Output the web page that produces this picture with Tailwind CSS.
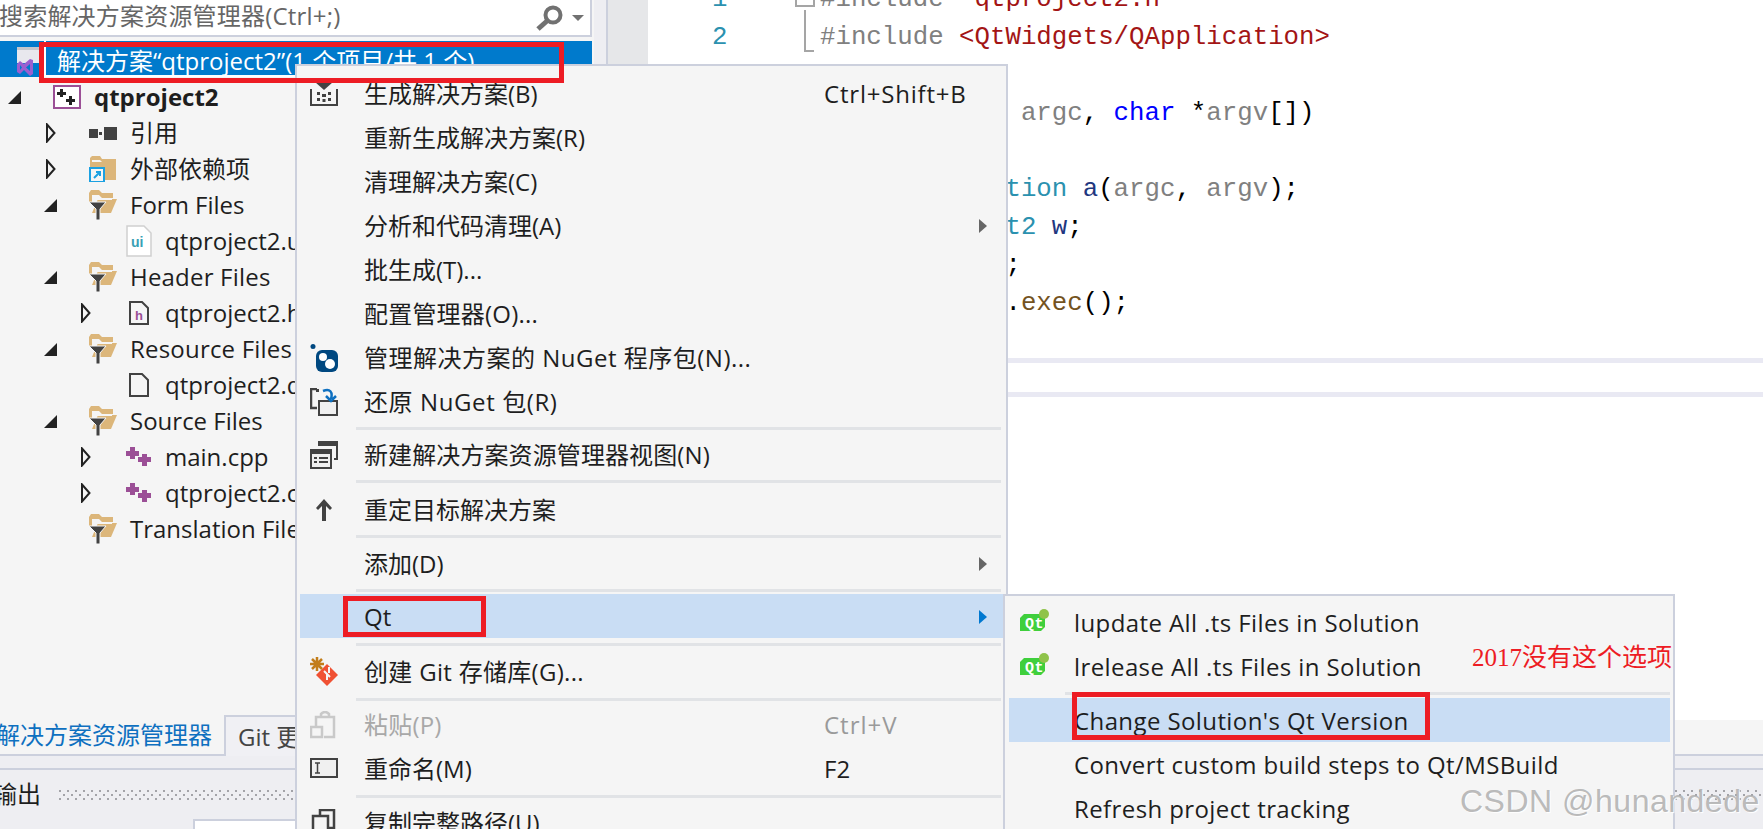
<!DOCTYPE html>
<html lang="zh-CN">
<head>
<meta charset="UTF-8">
<title>Solution Explorer context menu</title>
<script src="https://cdn.jsdelivr.net/npm/@tailwindcss/browser@4"></script>
</head>
<body class="bg-[#eeeef2]">
<svg class="absolute w-0 h-0">
  <defs>
    <symbol id="open" viewBox="0 0 10 20"><path d="M1 1.5 L8.5 10 L1 18.5 Z" fill="#f5f5f5" stroke="#222" stroke-width="2"/></symbol>
    <symbol id="down" viewBox="0 0 13 13"><path d="M13 0 V13 H0 Z" fill="#222"/></symbol>
    <symbol id="filter" viewBox="0 0 28 30">
      <path d="M0 3 L2 0 H10 L13 3 H24 V8 H8 L5 13 H0 Z" fill="#dcb67a"/>
      <path d="M9 9 H28 L22 23 H3 Z" fill="#dcb67a"/>
      <path d="M3 5 H10 L13 8 H23 V10 H8 L4 15 H3 Z" fill="#f5f5f5"/>
      <path d="M0 12 H17 L11 19 V30 H7 V19 Z" fill="#424242" stroke="#f5f5f5" stroke-width="1"/>
    </symbol>
    <symbol id="plus" viewBox="0 0 26 20" fill="#9b4f96">
      <path d="M4 0 H9 V4 H13 V9 H9 V12 H4 V9 H0 V4 H4 Z"/>
      <path d="M16 7 H21 V10 H25 V15 H21 V19 H16 V15 H12 V10 H16 Z"/>
    </symbol>
    <symbol id="qt" viewBox="0 0 30 26">
      <path d="M5 5 H26 V18 L22 22 H1 V9 Z" fill="#3fcf3c"/>
      <circle cx="25" cy="5" r="5" fill="#8fc34a"/>
      <text x="6" y="19" font-family="Liberation Mono" font-size="15" font-weight="700" fill="#fff">Qt</text>
    </symbol>
    <pattern id="dots" width="8" height="8" patternUnits="userSpaceOnUse">
      <rect x="0" y="0" width="2" height="2" fill="#a3a3a8"/>
      <rect x="4" y="4" width="2" height="2" fill="#a3a3a8"/>
    </pattern>
  </defs>
</svg>

<div class="relative w-[1763px] h-[829px] overflow-hidden text-[24px] text-[#1e1e1e] font-['Open_Sans','Noto_Sans_CJK_SC',sans-serif]">

  <div class="flex h-[756px]">
    <!-- solution explorer -->
    <div class="flex flex-col w-[594px] bg-[#f5f5f5]">
      <div class="flex items-center h-[37px] w-[592px] bg-white border-b-2 border-r-2 border-[#ccd0dd]">
        <span class="flex-1 -ml-[1px] -mt-[3px] tracking-[0.2px] text-[#666] whitespace-nowrap">搜索解决方案资源管理器(Ctrl+;)</span>
        <svg class="w-[50px] h-[28px] mr-[5px] -mt-[2px]" viewBox="0 0 50 28">
          <circle cx="18" cy="12" r="7.5" fill="none" stroke="#717171" stroke-width="4"/>
          <path d="M12 18 L3 26" stroke="#717171" stroke-width="5"/>
          <path d="M37 12 H49 L43 18 Z" fill="#717171"/>
        </svg>
      </div>
      <div class="flex h-[36px] w-[592px] mt-[4px] bg-[#007acc] text-white">
        <div class="w-[44px] pl-[17px]">
          <svg class="w-[22px] h-[30px] mt-[6px]" viewBox="0 0 22 30">
            <rect x="0" y="0" width="22" height="16" fill="#e8e8ee"/>
            <rect x="0" y="0" width="22" height="3" fill="#c4c6cc"/>
            <path d="M0 17 L3 14 L7 17 L13 12 L16 13 V27 L13 29 L7 23 L3 27 L0 25 Z M3 18 V23 L5 20.5 Z M9 20.5 L13 24 V17 Z" fill="#9b5fd0" fill-rule="evenodd"/>
          </svg>
        </div>
        <div class="flex-1 flex items-center pl-[11px] pt-[5px] border-l-2 border-b-2 border-white whitespace-nowrap">解决方案“qtproject2”(1 个项目/共 1 个)</div>
      </div>
      <div class="flex-1 mt-[2px] overflow-hidden whitespace-nowrap">
        <div class="flex items-center h-[36px] pl-[8px]">
          <svg class="w-[13px] h-[13px] mr-[32px]"><use href="#down"/></svg>
          <svg class="w-[28px] h-[24px] mr-[13px]" viewBox="0 0 28 24">
            <rect x="1" y="1" width="26" height="22" fill="#fff" stroke="#9b4f96" stroke-width="2"/>
            <path d="M7 4 H10 V7 H13 V10 H10 V12 H7 V10 H4 V7 H7 Z M16 11 H19 V14 H22 V17 H19 V20 H16 V17 H13 V14 H16 Z" fill="#222"/>
          </svg>
          <span class="font-bold">qtproject2</span>
        </div>
        <div class="flex items-center h-[36px] pl-[46px]">
          <svg class="w-[10px] h-[20px] mr-[33px]"><use href="#open"/></svg>
          <svg class="w-[28px] h-[13px] mr-[13px]" viewBox="0 0 28 13" fill="#424242"><rect x="0" y="2" width="9" height="9"/><rect x="10" y="5" width="3" height="3"/><rect x="15" y="0" width="13" height="13"/></svg>
          <span>引用</span>
        </div>
        <div class="flex items-center h-[36px] pl-[46px]">
          <svg class="w-[10px] h-[20px] mr-[33px]"><use href="#open"/></svg>
          <svg class="w-[28px] h-[26px] mr-[13px]" viewBox="0 0 28 26">
            <path d="M1 2 L3 0 H11 L13 3 H27 V24 H1 Z" fill="#dcb67a"/>
            <path d="M3 4 H11 L13 6 H3 Z" fill="#f5f5f5"/>
            <rect x="1" y="12" width="14" height="14" fill="#f5f5f5" stroke="#1ba1e2" stroke-width="2"/>
            <path d="M5 22 L11 16 M7 16 H11 V20" stroke="#1ba1e2" stroke-width="2" fill="none"/>
          </svg>
          <span>外部依赖项</span>
        </div>
        <div class="flex items-center h-[36px] pl-[44px]">
          <svg class="w-[13px] h-[13px] mr-[32px]"><use href="#down"/></svg>
          <svg class="w-[28px] h-[30px] mr-[13px]"><use href="#filter"/></svg>
          <span>Form Files</span>
        </div>
        <div class="flex items-center h-[36px] pl-[126px]">
          <svg class="w-[26px] h-[32px] mr-[13px]" viewBox="0 0 26 32">
            <path d="M1 1 H18 L25 8 V31 H1 Z" fill="#fff" stroke="#d0d0d0" stroke-width="1.5"/>
            <text x="5" y="22" font-family="Liberation Sans" font-size="14" font-weight="700" fill="#3a9fb5">ui</text>
          </svg>
          <span>qtproject2.ui</span>
        </div>
        <div class="flex items-center h-[36px] pl-[44px]">
          <svg class="w-[13px] h-[13px] mr-[32px]"><use href="#down"/></svg>
          <svg class="w-[28px] h-[30px] mr-[13px]"><use href="#filter"/></svg>
          <span class="tracking-[0.2px]">Header Files</span>
        </div>
        <div class="flex items-center h-[36px] pl-[81px]">
          <svg class="w-[10px] h-[20px] mr-[38px]"><use href="#open"/></svg>
          <svg class="w-[20px] h-[24px] mr-[16px]" viewBox="0 0 20 24">
            <path d="M1 1 H13 L19 7 V23 H1 Z" fill="#f5f5f5" stroke="#424242" stroke-width="2"/>
            <text x="6" y="19" font-family="Liberation Sans" font-size="13" font-weight="700" fill="#9b4f96">h</text>
          </svg>
          <span>qtproject2.h</span>
        </div>
        <div class="flex items-center h-[36px] pl-[44px]">
          <svg class="w-[13px] h-[13px] mr-[32px]"><use href="#down"/></svg>
          <svg class="w-[28px] h-[30px] mr-[13px]"><use href="#filter"/></svg>
          <span class="tracking-[0.2px]">Resource Files</span>
        </div>
        <div class="flex items-center h-[36px] pl-[129px]">
          <svg class="w-[20px] h-[24px] mr-[16px]" viewBox="0 0 20 24">
            <path d="M1 1 H13 L19 7 V23 H1 Z" fill="#f5f5f5" stroke="#424242" stroke-width="2"/>
          </svg>
          <span>qtproject2.qrc</span>
        </div>
        <div class="flex items-center h-[36px] pl-[44px]">
          <svg class="w-[13px] h-[13px] mr-[32px]"><use href="#down"/></svg>
          <svg class="w-[28px] h-[30px] mr-[13px]"><use href="#filter"/></svg>
          <span>Source Files</span>
        </div>
        <div class="flex items-center h-[36px] pl-[81px]">
          <svg class="w-[10px] h-[20px] mr-[35px]"><use href="#open"/></svg>
          <svg class="w-[26px] h-[20px] mr-[13px]"><use href="#plus"/></svg>
          <span>main.cpp</span>
        </div>
        <div class="flex items-center h-[36px] pl-[81px]">
          <svg class="w-[10px] h-[20px] mr-[35px]"><use href="#open"/></svg>
          <svg class="w-[26px] h-[20px] mr-[13px]"><use href="#plus"/></svg>
          <span>qtproject2.cpp</span>
        </div>
        <div class="flex items-center h-[36px] pl-[89px]">
          <svg class="w-[28px] h-[30px] mr-[13px]"><use href="#filter"/></svg>
          <span>Translation Files</span>
        </div>
      </div>
      <div class="flex h-[41px] whitespace-nowrap">
        <div class="flex items-center w-[226px] border-r-2 border-b-2 border-[#ccd0dd] text-[#0e70c0] overflow-hidden"><span class="-ml-[4px]">解决方案资源管理器</span></div>
        <div class="flex-1 flex items-center pl-[12px] border-t-2 border-[#ccd0dd] bg-[#f0f0f4] text-[#444]">Git 更改</div>
      </div>
    </div>

    <div class="w-[12px] bg-[#eeeef2]"></div>

    <!-- editor -->
    <div class="flex-1 flex flex-col border-l-2 border-[#ccd0dd] min-w-0">
      <div class="flex-1 flex overflow-hidden bg-white min-h-0">
        <div class="w-[40px] bg-[#e6e7e9]"></div>
        <div class="flex-1 min-w-0 overflow-hidden">
          <div class="flex h-[377px] -mt-[19px] text-[25.75px] leading-[38px] font-['Liberation_Mono','Noto_Sans_CJK_SC',monospace]">
            <div class="w-[147px] pl-[64px] text-[#2b91af]">
              <div>1</div>
              <div>2</div>
            </div>
            <svg class="w-[25px] h-[100px]" viewBox="0 0 25 100">
              <rect x="1" y="9" width="18" height="16" fill="#fff" stroke="#a5a5a5" stroke-width="2"/>
              <path d="M10 29 V70 H19" fill="none" stroke="#a5a5a5" stroke-width="2"/>
            </svg>
            <pre class="font-['Liberation_Mono',monospace] text-black"><span class="text-[#808080]">#include</span> <span class="text-[#a31515]">"qtproject2.h"</span>
<span class="text-[#808080]">#include</span> <span class="text-[#a31515]">&lt;QtWidgets/QApplication&gt;</span>

<span class="text-[#0000ff]">int</span> main(<span class="text-[#0000ff]">int</span> <span class="text-[#808080]">argc</span>, <span class="text-[#0000ff]">char</span> *<span class="text-[#808080]">argv</span>[])
{
    <span class="text-[#2b91af]">QApplication</span> <span class="text-[#1f377f]">a</span>(<span class="text-[#808080]">argc</span>, <span class="text-[#808080]">argv</span>);
    <span class="text-[#2b91af]">qtproject2</span> <span class="text-[#1f377f]">w</span>;
    <span class="text-[#1f377f]">w</span>.<span class="text-[#74531f]">show</span>();
    <span class="text-[#0000ff]">return</span> <span class="text-[#1f377f]">a</span>.<span class="text-[#74531f]">exec</span>();
}</pre>
          </div>
          <div class="h-[5px] bg-[#e9e9f3]"></div>
          <div class="h-[29px]"></div>
          <div class="h-[5px] bg-[#e9e9f3]"></div>
        </div>
      </div>
      <div class="h-[36px] bg-[#f5f5f5] border-b-2 border-[#ccd0dd]"></div>
    </div>
  </div>

  <!-- output panel -->
  <div class="pt-[12px] h-[73px] bg-[#eeeef2]">
    <div class="border-t-2 border-[#ccd0dd]">
      <div class="flex items-center h-[49px] whitespace-nowrap">
        <span class="-ml-[7px] -mt-[2px] w-[66px]">输出</span>
        <svg class="flex-1 h-[10px]"><rect width="100%" height="100%" fill="url(#dots)"/></svg>
      </div>
      <div class="flex">
        <div class="w-[193px] mt-[5px] pl-[50px] text-[#444] whitespace-nowrap overflow-hidden">显示输出</div>
        <div class="w-[120px] h-[30px] bg-white border-2 border-[#ccd0dd]"></div>
      </div>
    </div>
  </div>

  <!-- context menu -->
  <div class="absolute left-[295px] top-[64px] w-[713px] h-[790px] bg-[#f5f5f5] border-2 border-[#ccd0dd] pt-[6px] pl-[3px] pr-[3px] whitespace-nowrap">
    <div class="flex items-center h-[44px] pl-[10px]">
      <svg class="w-[28px] h-[28px] mr-[26px]" viewBox="0 0 28 28" fill="#424242">
        <path d="M0 9 H2 V24 H26 V9 H28 V26 H0 Z"/>
        <path d="M5 2 H23 L14 10 Z"/>
        <path d="M7 12 h3 v3 h-3 Z M18 12 h3 v3 h-3 Z M12 14 h4 v3 h-4 Z M7 18 h3 v3 h-3 Z M12.500 19 h3 v3 h-3 Z M18 18 h3 v3 h-3 Z"/>
      </svg>
      <span class="w-[460px]">生成解决方案(B)</span><span class="tracking-[0.8px]">Ctrl+Shift+B</span>
    </div>
    <div class="flex items-center h-[44px] pl-[64px]">重新生成解决方案(R)</div>
    <div class="flex items-center h-[44px] pl-[64px]">清理解决方案(C)</div>
    <div class="flex items-center h-[44px] pl-[64px]">
      <span class="w-[615px]">分析和代码清理(A)</span>
      <svg class="w-[8px] h-[14px]" viewBox="0 0 8 14"><path d="M0 0 L8 7 L0 14 Z" fill="#666"/></svg>
    </div>
    <div class="flex items-center h-[44px] pl-[64px]">批生成(T)...</div>
    <div class="flex items-center h-[44px] pl-[64px] tracking-[0.2px]">配置管理器(O)...</div>
    <div class="flex items-center h-[44px] pl-[10px]">
      <svg class="w-[28px] h-[28px] mr-[26px]" viewBox="0 0 28 28">
        <circle cx="3" cy="2.500" r="2.500" fill="#004880"/>
        <rect x="6" y="6" width="22" height="22" rx="6" fill="#004880"/>
        <circle cx="13" cy="13" r="4" fill="#fff"/>
        <circle cx="20" cy="20" r="5" fill="#fff"/>
      </svg>
      <span class="tracking-[0.5px]">管理解决方案的 NuGet 程序包(N)...</span>
    </div>
    <div class="flex items-center h-[44px] pl-[10px]">
      <svg class="w-[28px] h-[28px] mr-[26px]" viewBox="0 0 28 28">
        <path d="M7 1 H1 V20 H7" fill="none" stroke="#424242" stroke-width="2.500"/>
        <path d="M6 1 h3 v3 h-3 Z" fill="#424242"/>
        <path d="M9 13 H27 V27 H9 Z" fill="#f0f0f0" stroke="#424242" stroke-width="2"/>
        <path d="M13 3 C20 0 23 4 21 11 M16 8 L21 13 L26 8" fill="none" stroke="#0e70c0" stroke-width="2.500"/>
      </svg>
      <span class="tracking-[0.6px]">还原 NuGet 包(R)</span>
    </div>
    <div class="flex items-center h-[9px] pl-[56px]"><div class="flex-1 h-[3px] mr-[2px] bg-[#e1e3e6]"></div></div>
    <div class="flex items-center h-[44px] pl-[10px]">
      <svg class="w-[28px] h-[28px] mr-[26px]" viewBox="0 0 28 28">
        <path d="M8 1 H27 V18 H24" fill="none" stroke="#424242" stroke-width="2"/>
        <path d="M8 1 H27 V5 H8 Z" fill="#424242"/>
        <path d="M1 9 H21 V27 H1 Z" fill="#f0f0f0" stroke="#424242" stroke-width="2"/>
        <path d="M1 9 H21 V13 H1 Z" fill="#424242"/>
        <path d="M4 16 h3 v2 h-3 Z M9 16 h9 v2 h-9 Z M4 20 h3 v2 h-3 Z M9 20 h9 v2 h-9 Z" fill="#424242"/>
      </svg>
      <span class="tracking-[0.1px]">新建解决方案资源管理器视图(N)</span>
    </div>
    <div class="flex items-center h-[11px] pl-[56px]"><div class="flex-1 h-[3px] mb-[3px] mr-[2px] bg-[#e1e3e6]"></div></div>
    <div class="flex items-center h-[44px] pl-[10px]">
      <svg class="w-[28px] h-[28px] mr-[26px]" viewBox="0 0 28 28"><path d="M14 3 L22 12 L20 14 L16 10 V25 H12 V10 L8 14 L6 12 Z" fill="#424242"/></svg>
      <span>重定目标解决方案</span>
    </div>
    <div class="flex items-center h-[11px] pl-[56px]"><div class="flex-1 h-[3px] mb-[3px] mr-[2px] bg-[#e1e3e6]"></div></div>
    <div class="flex items-center h-[44px] pl-[64px] pb-[2px]">
      <span class="w-[615px]">添加(D)</span>
      <svg class="w-[8px] h-[14px]" viewBox="0 0 8 14"><path d="M0 0 L8 7 L0 14 Z" fill="#666"/></svg>
    </div>
    <div class="flex items-center h-[7px] pl-[56px]"><div class="flex-1 h-[3px] mr-[2px] bg-[#e1e3e6]"></div></div>
    <div class="flex items-center h-[44px] pl-[64px] pt-[2px] bg-[#c9ddf4]">
      <span class="w-[615px]">Qt</span>
      <svg class="w-[8px] h-[14px]" viewBox="0 0 8 14"><path d="M0 0 L8 7 L0 14 Z" fill="#0078d0"/></svg>
    </div>
    <div class="flex items-center h-[12px] pl-[56px]"><div class="flex-1 h-[3px] mr-[2px] bg-[#e1e3e6]"></div></div>
    <div class="flex items-center h-[44px] pl-[10px]">
      <svg class="w-[28px] h-[30px] mr-[26px]" viewBox="0 0 28 30">
        <path d="M17 7 L28 18 L17 29 L6 18 Z" fill="#f05133"/>
        <path d="M14 14 L20 20 M17 17 V23 M19 10 V16" stroke="#f5f5f5" stroke-width="2" fill="none"/>
        <path d="M7 0 V14 M0 7 H14 M2 2 L12 12 M12 2 L2 12" stroke="#c27d1a" stroke-width="2.500"/>
      </svg>
      <span class="tracking-[0.3px]">创建 Git 存储库(G)...</span>
    </div>
    <div class="flex items-center h-[10px] pl-[56px]"><div class="flex-1 h-[3px] mr-[2px] bg-[#e1e3e6]"></div></div>
    <div class="flex items-center h-[44px] pl-[10px] pb-[2px] text-[#a8a8a8]">
      <svg class="w-[28px] h-[28px] mr-[26px]" viewBox="0 0 28 28" fill="none" stroke="#c9c9c9" stroke-width="2.500">
        <path d="M6 15 V6 H24 V26 H14"/>
        <path d="M11 6 V3 Q15 -1 19 3 V6"/>
        <path d="M1 16 H12 V26 H1 Z"/>
      </svg>
      <span class="w-[460px] tracking-[0.2px]">粘贴(P)</span><span class="tracking-[1px] text-[#9a9a9a]">Ctrl+V</span>
    </div>
    <div class="flex items-center h-[44px] pl-[10px] pb-[2px]">
      <svg class="w-[28px] h-[22px] mr-[26px]" viewBox="0 0 28 22">
        <rect x="1" y="1" width="26" height="18" fill="#f0f0f0" stroke="#424242" stroke-width="2"/>
        <path d="M5 5 H10 M7.500 5 V15 M5 15 H10" stroke="#424242" stroke-width="1.500" fill="none"/>
      </svg>
      <span class="w-[460px]">重命名(M)</span><span>F2</span>
    </div>
    <div class="flex items-center h-[9px] pl-[56px]"><div class="flex-1 h-[3px] mr-[2px] bg-[#e1e3e6]"></div></div>
    <div class="flex items-center h-[44px] pl-[10px]">
      <svg class="w-[28px] h-[28px] mr-[26px]" viewBox="0 0 28 28" fill="none" stroke="#424242" stroke-width="2.500">
        <path d="M10 7 V1 H24 V19 H18"/>
        <path d="M3 7 H18 V27 H3 Z"/>
      </svg>
      <span>复制完整路径(U)</span>
    </div>
  </div>

  <!-- Qt submenu -->
  <div class="absolute left-[1003px] top-[594px] w-[672px] h-[260px] bg-[#f5f5f5] border-2 border-[#ccd0dd] pt-[5px] pl-[4px] pr-[3px] whitespace-nowrap tracking-[0.4px]">
    <div class="flex items-center h-[44px] pl-[10px]">
      <svg class="w-[30px] h-[26px] mr-[25px] -mt-[3px]"><use href="#qt"/></svg>
      <span>lupdate All .ts Files in Solution</span>
    </div>
    <div class="flex items-center h-[44px] pl-[10px]">
      <svg class="w-[30px] h-[26px] mr-[25px] -mt-[3px]"><use href="#qt"/></svg>
      <span>lrelease All .ts Files in Solution</span>
    </div>
    <div class="flex items-center h-[9px] pl-[56px]"><div class="flex-1 h-[3px] bg-[#e1e3e6]"></div></div>
    <div class="flex items-center h-[44px] pl-[65px] pt-[2px] bg-[#c9ddf4]">Change Solution's Qt Version</div>
    <div class="flex items-center h-[44px] pl-[65px] pt-[2px]">Convert custom build steps to Qt/MSBuild</div>
    <div class="flex items-center h-[44px] pl-[65px] pt-[2px]">Refresh project tracking</div>
  </div>

  <!-- annotations added on the screenshot -->
  <div class="absolute left-[39px] top-[42px] w-[525px] h-[41px] border-[5px] border-[#ed1c24]"></div>
  <div class="absolute left-[343px] top-[596px] w-[143px] h-[41px] border-[5px] border-[#ed1c24]"></div>
  <div class="absolute left-[1072px] top-[692px] w-[358px] h-[48px] border-[5px] border-[#ed1c24]"></div>
  <div class="absolute left-[1472px] top-[642px] text-[25px] leading-[32px] text-[#ed1c24] whitespace-nowrap font-['Liberation_Serif','Noto_Sans_CJK_SC',serif]">2017没有这个选项</div>
  <div class="absolute left-[1460px] top-[781px] text-[32px] leading-[40px] tracking-[0.5px] text-[#a9a9a9]/80 whitespace-nowrap font-['Liberation_Sans',sans-serif] [text-shadow:1px_1px_1px_#ffffff]">CSDN @hunandede</div>
</div>
</body>
</html>
